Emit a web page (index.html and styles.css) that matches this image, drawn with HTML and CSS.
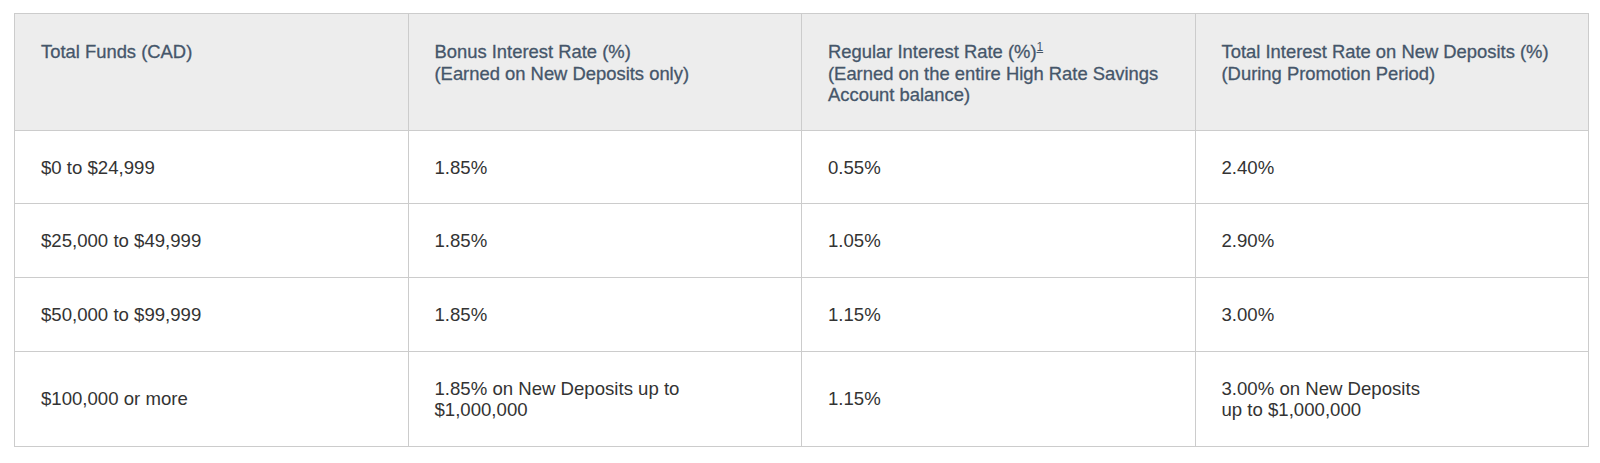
FILE: index.html
```
<!DOCTYPE html>
<html lang="en">
<head>
<meta charset="utf-8">
<title>Interest Rates</title>
<link rel="stylesheet" href="styles.css">
</head>
<body>
<div class="wrap">
<table class="rates">
  <thead>
    <tr>
      <th>Total Funds (CAD)</th>
      <th>Bonus Interest Rate (%)<br>(Earned on New Deposits only)</th>
      <th>Regular Interest Rate (%)<sup><a href="#fn1">1</a></sup><br>(Earned on the entire High Rate Savings<br>Account balance)</th>
      <th>Total Interest Rate on New Deposits (%)<br>(During Promotion Period)</th>
    </tr>
  </thead>
  <tbody>
    <tr><td>$0 to $24,999</td><td>1.85%</td><td>0.55%</td><td>2.40%</td></tr>
    <tr><td>$25,000 to $49,999</td><td>1.85%</td><td>1.05%</td><td>2.90%</td></tr>
    <tr><td>$50,000 to $99,999</td><td>1.85%</td><td>1.15%</td><td>3.00%</td></tr>
    <tr><td>$100,000 or more</td><td>1.85% on New Deposits up to $1,000,000</td><td>1.15%</td><td>3.00% on New Deposits<br>up to $1,000,000</td></tr>
  </tbody>
</table>
</div>
</body>
</html>
```
FILE: styles.css
```
html, body {
  margin: 0;
  padding: 0;
  background: #ffffff;
}
.wrap {
  padding: 13px 0 0 14px;
}
.rates {
  width: 1575px;
  table-layout: fixed;
  border-collapse: separate;
  border-spacing: 0;
  border-top: 1px solid #cccccc;
  border-left: 1px solid #cccccc;
  font-family: "Liberation Sans", Arial, sans-serif;
}
.rates th,
.rates td {
  border-right: 1px solid #cccccc;
  border-bottom: 1px solid #cccccc;
  padding: 26px 26px 25px 26px;
  text-align: left;
  line-height: 21.6px;
}
.rates th {
  background: #ededed;
  color: #45566a;
  font-size: 18.4px;
  font-weight: normal;
  vertical-align: top;
  padding-top: 27px;
  padding-bottom: 24px;
  -webkit-text-stroke: 0.3px #45566a;
}
.rates td {
  color: #333333;
  font-size: 18.6px;
  vertical-align: middle;
}
.rates sup {
  font-size: 12px;
  line-height: 0;
  vertical-align: 7px;
  -webkit-text-stroke: 0;
}
.rates sup a {
  color: #45566a;
  text-decoration: underline;
}
```
